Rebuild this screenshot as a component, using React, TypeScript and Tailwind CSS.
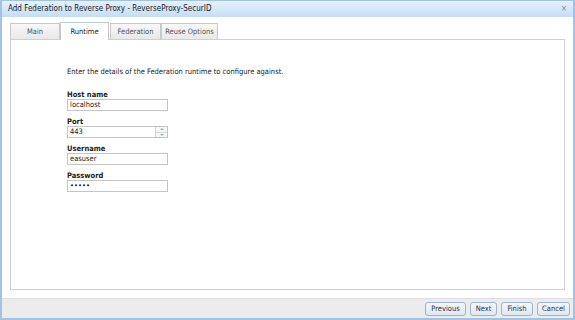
import React from "react";

const font = { fontFamily: '"DejaVu Sans Condensed", "DejaVu Sans", sans-serif' };

function Field({ label, value, spinner }: { label: string; value: string; spinner?: boolean }) {
  return (
    <div className="flex flex-col">
      <div className="text-[7.5px] font-bold text-[#222] leading-[9px]">{label}</div>
      <div className="relative w-[101px] h-[12px] border border-[#c5c5c5] bg-white flex items-center pl-[2px] text-[7.5px] text-[#222] leading-none">
        {value}
        {spinner && (
          <div className="absolute right-0 top-0 bottom-0 w-[12px] border-l border-[#d0d0d0] flex flex-col">
            <div className="flex-1 border-b border-[#d8d8d8] bg-[#f4f6f8] flex items-center justify-center">
              <div className="w-0 h-0 border-l-[2px] border-r-[2px] border-b-[2px] border-l-transparent border-r-transparent border-b-[#9aa8b8]" />
            </div>
            <div className="flex-1 bg-[#f4f6f8] flex items-center justify-center">
              <div className="w-0 h-0 border-l-[2px] border-r-[2px] border-t-[2px] border-l-transparent border-r-transparent border-t-[#9aa8b8]" />
            </div>
          </div>
        )}
      </div>
    </div>
  );
}

function Btn({ children, w }: { children: React.ReactNode; w: string }) {
  return (
    <div
      className={`${w} h-[14px] rounded-[3px] border border-[#9db4cf] bg-gradient-to-b from-[#f3f7fb] to-[#dfe8f2] flex items-center justify-center text-[7.5px] text-[#334]`}
    >
      {children}
    </div>
  );
}

export default function App() {
  return (
    <div className="w-[575px] h-[320px] bg-white overflow-hidden" style={font}>
      <div className="w-full h-full flex flex-col border-l-2 border-r-2 border-b-2 border-[#a4c2e4]">
        <div className="h-[17px] shrink-0 bg-gradient-to-b from-[#e6f1fc] to-[#c4dcf6] border-t border-[#a4c2e4] flex items-center justify-between pl-[6px] pr-[6px]">
          <span className="text-[8px] text-[#1a1a1a]">Add Federation to Reverse Proxy - ReverseProxy-SecurID</span>
          <span className="text-[8px] text-[#888] leading-none">×</span>
        </div>
        <div className="flex-1 flex flex-col px-[8px] pt-[4px] pb-[8px]">
          <div className="flex items-end h-[18px] shrink-0">
            <div className="w-[50px] h-[16px] border border-[#c8c8c8] border-b-0 bg-gradient-to-b from-[#f8f8f8] to-[#e8e8e8] flex items-center justify-center text-[7.5px] text-[#555]">Main</div>
            <div className="w-[49px] h-[18px] border border-[#c8c8c8] border-b-0 border-t-[#b8d0ec] bg-white flex items-center justify-center text-[7.5px] text-[#222] -mb-[1px] relative z-10">Runtime</div>
            <div className="w-[51px] h-[16px] ml-[1px] border border-[#c8c8c8] border-b-0 bg-gradient-to-b from-[#f8f8f8] to-[#e8e8e8] flex items-center justify-center text-[7.5px] text-[#555]">Federation</div>
            <div className="w-[57px] h-[16px] border border-[#c8c8c8] border-b-0 bg-gradient-to-b from-[#f8f8f8] to-[#e8e8e8] flex items-center justify-center text-[7.5px] text-[#555]">Reuse Options</div>
          </div>
          <div className="flex-1 border border-[#cfcfcf] bg-white pl-[56px] pt-[27px]">
            <div className="text-[7.5px] text-[#222] leading-[10px]">Enter the details of the Federation runtime to configure against.</div>
            <div className="flex flex-col gap-[6px] mt-[13px]">
              <Field label="Host name" value="localhost" />
              <Field label="Port" value="443" spinner />
              <Field label="Username" value="easuser" />
              <Field label="Password" value="•••••" />
            </div>
          </div>
        </div>
        <div className="h-[20px] shrink-0 bg-[#ececec] border-t border-[#dedede] flex items-center justify-end gap-[4px] pr-[3px]">
          <Btn w="w-[41px]">Previous</Btn>
          <Btn w="w-[27px]">Next</Btn>
          <Btn w="w-[32px]">Finish</Btn>
          <Btn w="w-[33px]">Cancel</Btn>
        </div>
      </div>
    </div>
  );
}
